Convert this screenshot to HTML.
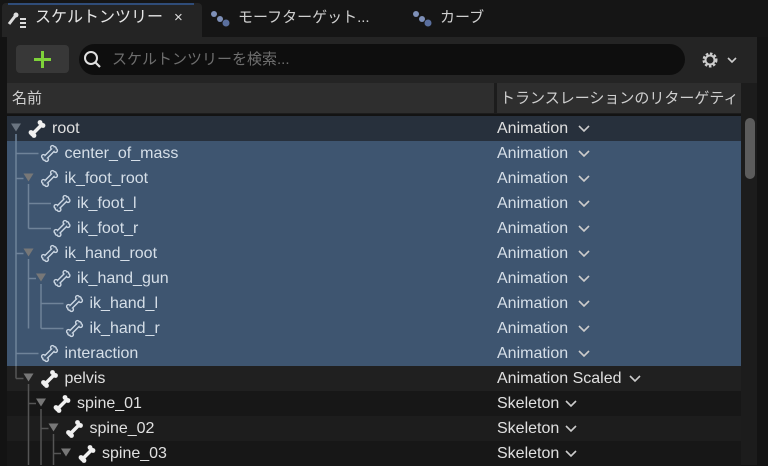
<!DOCTYPE html>
<html><head><meta charset="utf-8"><style>
*{margin:0;padding:0;box-sizing:border-box}
body{width:768px;height:465px;overflow:hidden;background:#131313;font-family:"Liberation Sans","Noto Sans CJK JP",sans-serif;color:#d0d0d0;position:relative}
.a{position:absolute}
.t{font-size:15px;white-space:nowrap;line-height:25px}
.r{font-size:16px}
</style></head><body>
<div class="a" style="left:0;top:0;width:768px;height:37px;background:#151515"></div>
<div class="a" style="left:2px;top:3px;width:200px;height:34px;background:#242424;border-radius:4px 4px 0 0"></div>
<div class="a" style="left:8px;top:3px;width:186px;height:2px;background:#2f4c78"></div>
<svg class="a" style="left:6px;top:10px" width="22" height="20"><path d="M3 14 L10 5" stroke="#ddd" stroke-width="3"/><circle cx="10" cy="5" r="2.5" fill="#ddd"/><rect x="14" y="8" width="6" height="2" fill="#ddd"/><rect x="14" y="12" width="6" height="2" fill="#ddd"/><rect x="14" y="16" width="6" height="2" fill="#ddd"/></svg>
<div class="a t" style="left:35px;top:5px;color:#e6e6e6;font-size:16px">スケルトンツリー</div>
<div class="a t" style="left:174px;top:5px;color:#ddd;font-size:15px">×</div>
<svg class="a" style="left:210px;top:10px" width="22" height="18"><circle cx="4" cy="4" r="3" fill="#7e90b8"/><circle cx="10" cy="9" r="3" fill="#7e90b8"/><circle cx="16" cy="13" r="3.5" fill="#5a6f9e"/></svg>
<div class="a t" style="left:238px;top:5px;color:#cfcfcf;font-size:15px">モーフターゲット...</div>
<svg class="a" style="left:412px;top:10px" width="22" height="18"><circle cx="4" cy="4" r="3" fill="#7e90b8"/><circle cx="10" cy="9" r="3" fill="#7e90b8"/><circle cx="16" cy="13" r="3.5" fill="#5a6f9e"/></svg>
<div class="a t" style="left:440px;top:5px;color:#cfcfcf;font-size:15px">カーブ</div>
<div class="a" style="left:7px;top:37px;width:750px;height:46px;background:#242424"></div>
<div class="a" style="left:16px;top:45px;width:53px;height:28px;background:#383838;border-radius:4px"></div>
<div class="a" style="left:34px;top:58px;width:17px;height:3px;background:#7ed23a"></div>
<div class="a" style="left:41px;top:51px;width:3px;height:17px;background:#7ed23a"></div>
<div class="a" style="left:79px;top:44px;width:606px;height:31px;background:#0e0e0e;border-radius:16px"></div>
<svg class="a" style="left:83px;top:50px" width="20" height="20"><circle cx="8" cy="8" r="6" stroke="#e0e0e0" stroke-width="2" fill="none"/><path d="M12 12 L17 17" stroke="#e0e0e0" stroke-width="2.2"/></svg>
<div class="a t" style="left:112px;top:47px;color:#6e6e6e;font-size:15px">スケルトンツリーを検索...</div>
<svg class="a" style="left:700px;top:50px" width="42" height="20"><circle cx="10" cy="10" r="6" fill="none" stroke="#ccc" stroke-width="3" stroke-dasharray="2.4 1.6"/><circle cx="10" cy="10" r="4.5" fill="none" stroke="#ccc" stroke-width="2"/><path d="M28 8 L32 12 L36 8" stroke="#ccc" stroke-width="1.6" fill="none"/></svg>
<div class="a" style="left:7px;top:83px;width:734px;height:31px;background:#1c1c1c"></div>
<div class="a" style="left:7px;top:83px;width:487px;height:30px;background:#2e2e2e"></div>
<div class="a" style="left:497px;top:83px;width:244px;height:30px;background:#2e2e2e"></div>
<div class="a t" style="left:12px;top:86px;color:#cfcfcf">名前</div>
<div class="a t" style="left:500px;top:86px;color:#cfcfcf">トランスレーションのリターゲティ</div>
<div class="a" style="left:741px;top:83px;width:16px;height:382px;background:#1c1c1c"></div>
<div class="a" style="left:745px;top:118px;width:10px;height:61px;background:#5c5c5c;border-radius:5px"></div>
<div id="rows"></div>
<svg id="tree" class="a" style="left:0;top:0" width="741" height="465"></svg>
<script>
var nodes=[["root",0,1,"Animation"],["center_of_mass",1,0,"Animation"],["ik_foot_root",1,1,"Animation"],["ik_foot_l",2,0,"Animation"],["ik_foot_r",2,0,"Animation"],["ik_hand_root",1,1,"Animation"],["ik_hand_gun",2,1,"Animation"],["ik_hand_l",3,0,"Animation"],["ik_hand_r",3,0,"Animation"],["interaction",1,0,"Animation"],["pelvis",1,1,"Animation Scaled"],["spine_01",2,1,"Skeleton"],["spine_02",3,1,"Skeleton"],["spine_03",4,1,"Skeleton"]];
var bgs=["#27303c"].concat(Array(9).fill("#3e5570"),["#202020","#171717","#1d1d1d","#171717"]);
var h="",s="";
nodes.forEach(function(n,i){
 var top=116+25*i,sel=i>=1&&i<=9,L=n[1],cy=top+12.5;
 h+='<div class="a" style="left:7px;top:'+top+'px;width:734px;height:25px;background:'+bgs[i]+'"></div>';
 var tc=sel?"#d6dfe8":"#e0e0e0";
 h+='<div class="a t r" style="left:'+(52+12.5*L)+'px;top:'+top+'px;color:'+tc+'">'+n[0]+'</div>';
 h+='<div class="a t r" style="left:497px;top:'+top+'px;color:'+tc+'">'+n[3]+'</div>';
 var bx=28+12.5*L, lc=sel?"#6f8399":"#555";
 if(n[2]){var tx=11+12.5*L;s+='<path d="M'+tx+' '+(cy-5)+' L'+(tx+10)+' '+(cy-5)+' L'+(tx+5)+' '+(cy+3)+'Z" fill="'+(i==0?"#6a7480":"#777")+'"/>';}
 if(L>0){var px=16+12.5*(L-1);var ex=n[2]?11+12.5*L:bx-2;s+='<path d="M'+px+' '+cy+' H'+ex+'" stroke="'+lc+'" stroke-width="1.5"/>';}
 var col=sel?"#cbd6e2":"#f0f0f0";
 var g='<g transform="translate('+bx+','+(cy-9)+')">';
 if(sel){g+='<path d="M4 14 L14 4" stroke="'+col+'" stroke-width="5" stroke-linecap="round"/><circle cx="3" cy="12" r="2.6" fill="'+col+'"/><circle cx="6" cy="15" r="2.6" fill="'+col+'"/><circle cx="12" cy="3" r="2.6" fill="'+col+'"/><circle cx="15" cy="6" r="2.6" fill="'+col+'"/>'+
 '<path d="M4 14 L14 4" stroke="#3e5570" stroke-width="2.2" stroke-linecap="round"/><circle cx="3" cy="12" r="1.2" fill="#3e5570"/><circle cx="6" cy="15" r="1.2" fill="#3e5570"/><circle cx="12" cy="3" r="1.2" fill="#3e5570"/><circle cx="15" cy="6" r="1.2" fill="#3e5570"/>';}
 else{g+='<path d="M4 15 L14 5" stroke="'+col+'" stroke-width="3.5" stroke-linecap="round"/><circle cx="3" cy="13" r="2.4" fill="'+col+'"/><circle cx="6" cy="16" r="2.4" fill="'+col+'"/><circle cx="12" cy="3" r="2.4" fill="'+col+'"/><circle cx="15" cy="6" r="2.4" fill="'+col+'"/>';}
 s+=g+'</g>';
});
document.getElementById("rows").innerHTML=h;
var v=[[0,10],[2,4],[5,8],[6,8],[10,14],[11,14],[12,14]];
var out="";
v.forEach(function(p){var L=nodes[p[0]][1];var x=16+12.5*L;var y1=116+25*p[0]+18;var y2=p[1]>=14?465:116+25*p[1]+12.5;
 var c=p[0]>=10?"#555":"#6f8399";
 if(p[0]==0){out+='<path d="M'+x+' '+y1+' V'+(116+25*10)+'" stroke="#6f8399" stroke-width="1.5"/><path d="M'+x+' '+(116+250)+' V'+(116+25*10+12.5)+'" stroke="#555" stroke-width="1.5"/>';}
 else out+='<path d="M'+x+' '+y1+' V'+y2+'" stroke="'+c+'" stroke-width="1.5"/>';});
document.getElementById("tree").innerHTML=out+s;
var ch="";
nodes.forEach(function(n,i){var top=116+25*i;var w={"Animation":81,"Animation Scaled":132,"Skeleton":68}[n[3]];
 ch+='<svg class="a" style="left:'+(497+w)+'px;top:'+(top+8)+'px" width="12" height="10"><path d="M1 2 L6 7 L11 2" stroke="#ccc" stroke-width="1.6" fill="none"/></svg>';});
document.getElementById("rows").innerHTML+=ch;
</script>
</body></html>
